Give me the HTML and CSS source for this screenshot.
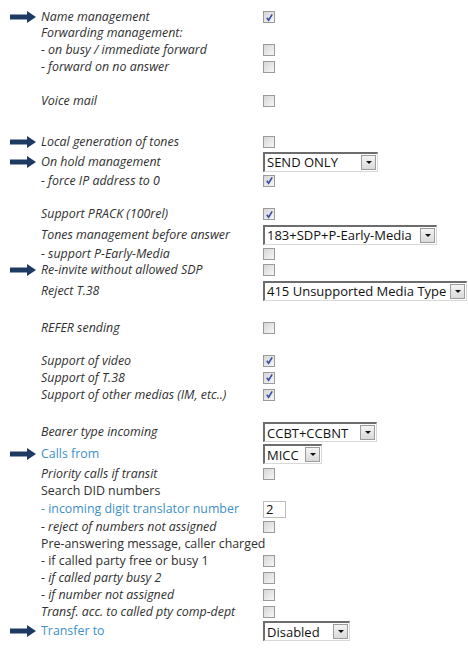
FILE: index.html
```html
<!DOCTYPE html>
<html>
<head>
<meta charset="utf-8">
<link rel="stylesheet" href="styles.css">
</head>
<body>
<div class="form">
  <div class="row h16"><span class="mark"><svg class="arrow" viewBox="0 0 26 12"><rect x="0" y="3.5" width="18" height="5"/><polygon points="17,0 26,6 17,12"/></svg></span><span class="label it">Name management</span><span class="ctl"><span class="cb on"><svg viewBox="0 0 10 10"><path d="M2 5.2 L4 8 L8 1.5"/></svg></span></span></div>
  <div class="row h16"><span class="mark"></span><span class="label it">Forwarding management:</span><span class="ctl"></span></div>
  <div class="row h17"><span class="mark"></span><span class="label it">- on busy / immediate forward</span><span class="ctl"><span class="cb"></span></span></div>
  <div class="row h17"><span class="mark"></span><span class="label it">- forward on no answer</span><span class="ctl"><span class="cb"></span></span></div>
  <div class="gap h17"></div>
  <div class="row h17"><span class="mark"></span><span class="label it">Voice mail</span><span class="ctl"><span class="cb"></span></span></div>
  <div class="gap h24"></div>
  <div class="row h18"><span class="mark"><svg class="arrow" viewBox="0 0 26 12"><rect x="0" y="3.5" width="18" height="5"/><polygon points="17,0 26,6 17,12"/></svg></span><span class="label it">Local generation of tones</span><span class="ctl"><span class="cb"></span></span></div>
  <div class="row h21"><span class="mark"><svg class="arrow" viewBox="0 0 26 12"><rect x="0" y="3.5" width="18" height="5"/><polygon points="17,0 26,6 17,12"/></svg></span><span class="label it">On hold management</span><span class="ctl"><span class="sel w115"><span class="val">SEND ONLY</span><span class="btn"><i></i></span></span></span></div>
  <div class="row h17"><span class="mark"></span><span class="label it">- force IP address to 0</span><span class="ctl"><span class="cb on"><svg viewBox="0 0 10 10"><path d="M2 5.2 L4 8 L8 1.5"/></svg></span></span></div>
  <div class="gap h16"></div>
  <div class="row h18"><span class="mark"></span><span class="label it">Support PRACK (100rel)</span><span class="ctl"><span class="cb on"><svg viewBox="0 0 10 10"><path d="M2 5.2 L4 8 L8 1.5"/></svg></span></span></div>
  <div class="row h23"><span class="mark"></span><span class="label it">Tones management before answer</span><span class="ctl"><span class="sel w174"><span class="val">183+SDP+P-Early-Media</span><span class="btn"><i></i></span></span></span></div>
  <div class="row h15"><span class="mark"></span><span class="label it">- support P-Early-Media</span><span class="ctl"><span class="cb"></span></span></div>
  <div class="row h18"><span class="mark"><svg class="arrow" viewBox="0 0 26 12"><rect x="0" y="3.5" width="18" height="5"/><polygon points="17,0 26,6 17,12"/></svg></span><span class="label it">Re-invite without allowed SDP</span><span class="ctl"><span class="cb"></span></span></div>
  <div class="row h23"><span class="mark"></span><span class="label it">Reject T.38</span><span class="ctl"><span class="sel w204"><span class="val">415 Unsupported Media Type</span><span class="btn"><i></i></span></span></span></div>
  <div class="gap h17"></div>
  <div class="row h17"><span class="mark"></span><span class="label it">REFER sending</span><span class="ctl"><span class="cb"></span></span></div>
  <div class="gap h16"></div>
  <div class="row h17"><span class="mark"></span><span class="label it">Support of video</span><span class="ctl"><span class="cb on"><svg viewBox="0 0 10 10"><path d="M2 5.2 L4 8 L8 1.5"/></svg></span></span></div>
  <div class="row h17"><span class="mark"></span><span class="label it">Support of T.38</span><span class="ctl"><span class="cb on"><svg viewBox="0 0 10 10"><path d="M2 5.2 L4 8 L8 1.5"/></svg></span></span></div>
  <div class="row h17"><span class="mark"></span><span class="label it">Support of other medias (IM, etc..)</span><span class="ctl"><span class="cb on"><svg viewBox="0 0 10 10"><path d="M2 5.2 L4 8 L8 1.5"/></svg></span></span></div>
  <div class="gap h18"></div>
  <div class="row h22"><span class="mark"></span><span class="label it">Bearer type incoming</span><span class="ctl"><span class="sel w114"><span class="val">CCBT+CCBNT</span><span class="btn"><i></i></span></span></span></div>
  <div class="row h22"><span class="mark"><svg class="arrow" viewBox="0 0 26 12"><rect x="0" y="3.5" width="18" height="5"/><polygon points="17,0 26,6 17,12"/></svg></span><span class="label blue">Calls from</span><span class="ctl"><span class="sel w59"><span class="val">MICC</span><span class="btn"><i></i></span></span></span></div>
  <div class="row h17"><span class="mark"></span><span class="label it">Priority calls if transit</span><span class="ctl"><span class="cb"></span></span></div>
  <div class="row h18"><span class="mark"></span><span class="label">Search DID numbers</span><span class="ctl"></span></div>
  <div class="row h18"><span class="mark"></span><span class="label blue">- incoming digit translator number</span><span class="ctl"><span class="txt">2</span></span></div>
  <div class="row h17"><span class="mark"></span><span class="label it">- reject of numbers not assigned</span><span class="ctl"><span class="cb"></span></span></div>
  <div class="row h17"><span class="mark"></span><span class="label">Pre-answering message, caller charged</span><span class="ctl"></span></div>
  <div class="row h17"><span class="mark"></span><span class="label">- if called party free or busy 1</span><span class="ctl"><span class="cb"></span></span></div>
  <div class="row h17"><span class="mark"></span><span class="label">- <em>if called party busy 2</em></span><span class="ctl"><span class="cb"></span></span></div>
  <div class="row h17"><span class="mark"></span><span class="label">- <em>if number not assigned</em></span><span class="ctl"><span class="cb"></span></span></div>
  <div class="row h17"><span class="mark"></span><span class="label it">Transf. acc. to called pty comp-dept</span><span class="ctl"><span class="cb"></span></span></div>
  <div class="row h22"><span class="mark"><svg class="arrow" viewBox="0 0 26 12"><rect x="0" y="3.5" width="18" height="5"/><polygon points="17,0 26,6 17,12"/></svg></span><span class="label blue">Transfer to</span><span class="ctl"><span class="sel w87"><span class="val">Disabled</span><span class="btn"><i></i></span></span></span></div>
</div>
</body>
</html>
```

FILE: styles.css
```css
html, body {
  margin: 0;
  padding: 0;
  background: #ffffff;
}
body {
  font-family: "Open Sans", "Noto Sans", sans-serif;
  font-size: 12.4px;
  color: #303030;
}
.form {
  padding-top: 9px;
  display: flex;
  flex-direction: column;
}
.row {
  display: flex;
  align-items: center;
}
.h15 { height: 15px; }
.h16 { height: 16px; }
.h17 { height: 17px; }
.h18 { height: 18px; }
.h21 { height: 21px; }
.h22 { height: 22px; }
.h23 { height: 23px; }
.h24 { height: 24px; }
.mark {
  width: 41px;
  flex: none;
  display: flex;
  align-items: center;
  padding-left: 10px;
  box-sizing: border-box;
}
.arrow {
  width: 26px;
  height: 12px;
  fill: #1d3a63;
  display: block;
}
.label {
  width: 222px;
  flex: none;
  white-space: nowrap;
  line-height: 16px;
}
.it, .label em {
  font-style: italic;
}
.blue {
  color: #3d90c8;
}
.ctl {
  display: flex;
  align-items: center;
}
.cb {
  width: 12px;
  height: 12px;
  box-sizing: border-box;
  border: 1px solid #9a9a9a;
  background: linear-gradient(135deg, #d6d6d6, #f6f6f6);
  display: flex;
  align-items: center;
  justify-content: center;
}
.cb svg {
  width: 9px;
  height: 9px;
  fill: none;
  stroke: #3a4ea6;
  stroke-width: 1.8;
}
.sel {
  height: 20px;
  box-sizing: border-box;
  border-top: 2px solid #6d6d6d;
  border-left: 2px solid #6d6d6d;
  border-right: 1px solid #d8d8d8;
  border-bottom: 1px solid #d8d8d8;
  display: flex;
  align-items: center;
  justify-content: space-between;
  padding-left: 2px;
  padding-right: 1px;
  background: #fff;
  font-size: 13px;
  color: #111;
}
.val {
  white-space: nowrap;
  line-height: 16px;
}
.btn {
  width: 15px;
  height: 15px;
  box-sizing: border-box;
  border: 1px solid #9c9c9c;
  background: linear-gradient(#f4f4f4, #d9d9d9);
  display: flex;
  align-items: center;
  justify-content: center;
  flex: none;
}
.btn i {
  width: 0;
  height: 0;
  border-left: 3px solid transparent;
  border-right: 3px solid transparent;
  border-top: 3px solid #111;
}
.w115 { width: 115px; }
.w174 { width: 174px; }
.w204 { width: 204px; }
.w114 { width: 114px; }
.w59 { width: 59px; }
.w87 { width: 87px; }
.txt {
  width: 23px;
  height: 17px;
  box-sizing: border-box;
  border: 1px solid #bdbdbd;
  font-size: 13px;
  line-height: 15px;
  padding-left: 2px;
  color: #111;
}
```
